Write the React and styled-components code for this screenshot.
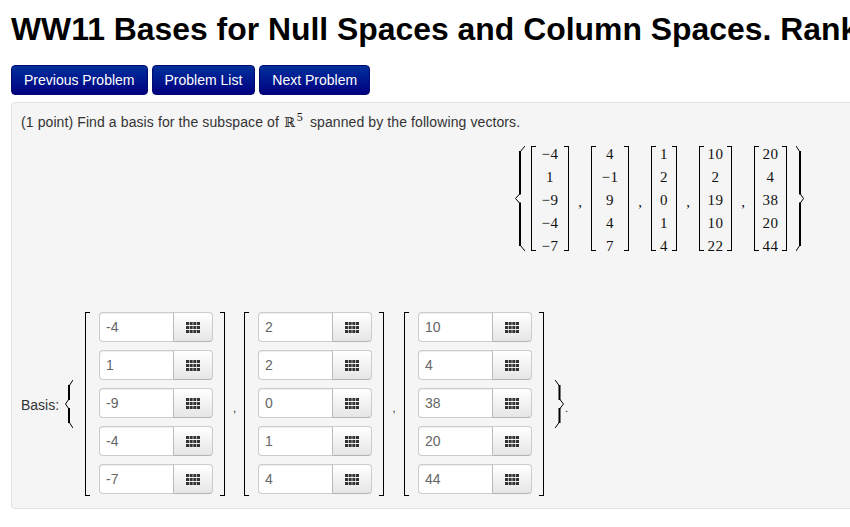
import React from 'react'
import styled, { createGlobalStyle } from 'styled-components'

const GlobalStyle = createGlobalStyle`
    html, body {
        margin: 0;
        padding: 0;
        background-color: white;
        overflow: hidden;
    }
`

const Page = styled.div`
    width: 850px;
    height: 527px;
    overflow: hidden;
    box-sizing: border-box;
    padding: 11px 0 0 11px;
    font-family: "Liberation Sans", Arial, sans-serif;
    color: #333;
`

const Title = styled.h1`
    margin: 0;
    height: 36px;
    line-height: 36px;
    font-size: 31.9px;
    font-weight: bold;
    color: #000;
    white-space: nowrap;
`

const Toolbar = styled.div`
    display: flex;
    gap: 4px;
    margin-top: 18px;
`

const NavButton = styled.a`
    display: block;
    box-sizing: border-box;
    height: 30px;
    line-height: 28px;
    padding: 0 12px;
    font-size: 14px;
    color: white;
    border: 1px solid #000a70;
    border-radius: 4px;
    background: linear-gradient(to bottom, #00309c, #000080);
`

const Panel = styled.div`
    box-sizing: border-box;
    width: 860px;
    height: 407px;
    margin-top: 7px;
    padding: 10px 9px;
    background-color: #f5f5f5;
    border: 1px solid #e3e3e3;
    border-radius: 4px;
`

const Statement = styled.p`
    margin: -1px 0 1px;
    height: 20px;
    line-height: 20px;
    font-size: 14px;
    letter-spacing: 0.1px;
    white-space: nowrap;
`

const Blackboard = styled.span`
    font-family: "DejaVu Serif", serif;
    font-size: 13px;
    margin-left: 1px;
    color: #222;
`

const Power = styled.sup`
    font-family: "Liberation Serif", serif;
    font-size: 12px;
    line-height: 0;
    margin: 0 3px 0 2px;
    color: #111;
`

const DisplayMath = styled.div`
    display: flex;
    align-items: center;
    height: 105px;
    margin-top: 14px;
    margin-left: 494px;
    font-family: "Liberation Serif", serif;
    font-size: 15px;
    color: #111;
`

const MathMatrix = styled.div`
    display: flex;
    align-items: stretch;
    height: 105px;
`

const MathColumn = styled.div`
    display: flex;
    flex-direction: column;
    gap: 7px;
    align-items: center;
    width: ${(props) => props.$width}px;
`

const MathCell = styled.span`
    height: 16px;
    line-height: 16px;
    letter-spacing: 0.5px;
    white-space: nowrap;
`

const MathComma = styled.span`
    width: ${(props) => props.$width}px;
    text-align: center;
    margin-top: 8px;
`

const Bracket = styled.span`
    display: block;
    box-sizing: border-box;
    flex: none;
    width: 5px;
    border: 0 solid #000;
    border-top-width: 1px;
    border-bottom-width: 1px;
    ${(props) => (props.$right ? 'border-right-width: 1px;' : 'border-left-width: 1px;')}
`

const BraceIcon = styled.svg`
    display: block;
    flex: none;
`

const BasisRow = styled.div`
    display: flex;
    align-items: center;
    margin-top: 61px;
    font-size: 14px;
`

const BasisLabel = styled.span`
    width: 44px;
    line-height: 20px;
    padding-top: 2px;
`

const VectorBox = styled.div`
    display: flex;
    align-items: stretch;
    height: 184px;
`

const VectorInputs = styled.div`
    display: flex;
    flex-direction: column;
    gap: 8px;
    margin: 0 7px 0 9px;
`

const InputGroup = styled.div`
    display: flex;
    width: 114px;
    height: 30px;
`

const AnswerInput = styled.input`
    box-sizing: border-box;
    width: 74px;
    height: 30px;
    padding: 0 6px;
    font-family: inherit;
    font-size: 14px;
    color: #666;
    background: white;
    border: 1px solid #ccc;
    border-right: 0;
    border-radius: 4px 0 0 4px;
    box-shadow: inset 0 1px 1px rgba(0, 0, 0, 0.075);
    outline: none;
`

const PadButton = styled.button`
    box-sizing: border-box;
    display: flex;
    align-items: center;
    justify-content: center;
    width: 40px;
    height: 30px;
    padding: 0;
    background: linear-gradient(to bottom, #fff, #e6e6e6);
    border: 1px solid #ccc;
    border-left-color: #bbb;
    border-bottom-color: #b3b3b3;
    border-radius: 0 4px 4px 0;
`

const Separator = styled.span`
    display: block;
    flex: none;
    box-sizing: border-box;
    width: ${(props) => props.$width}px;
    padding-top: ${(props) => props.$drop || 0}px;
    text-align: ${(props) => props.$align || 'center'};
    font-size: 11px;
    color: #111;
`

const GridIcon = () => (
    <svg width="14" height="11" viewBox="0 0 14 11" fill="#333">
        {[0, 4, 8].map((y) =>
            [0, 3.67, 7.33, 11].map((x) => <rect key={x + '-' + y} x={x} y={y} width="3" height="3" />)
        )}
    </svg>
)

// thin tails and tip, thicker straight part, like the TeX brace in the picture
const Brace = ({ right, width, height }) => {
    const mid = height / 2
    const stem = width * 0.5
    const tails = `M${width} 0 L${stem} 6 M${stem} ${mid - 5} L0.5 ${mid} L${stem} ${mid + 5} M${stem} ${height - 6} L${width} ${height}`
    const stems = `M${stem} 5 L${stem} ${mid - 4} M${stem} ${mid + 4} L${stem} ${height - 5}`
    return (
        <BraceIcon width={width} height={height} viewBox={`0 0 ${width} ${height}`}>
            <g transform={right ? `translate(${width} 0) scale(-1 1)` : undefined} fill="none" stroke="#000">
                <path d={tails} strokeWidth="1" />
                <path d={stems} strokeWidth="2" />
            </g>
        </BraceIcon>
    )
}

const mathVectors = [
    { width: 28, cells: ['−4', '1', '−9', '−4', '−7'] },
    { width: 28, cells: ['4', '−1', '9', '4', '7'] },
    { width: 16, cells: ['1', '2', '0', '1', '4'] },
    { width: 23, cells: ['10', '2', '19', '10', '22'] },
    { width: 23, cells: ['20', '4', '38', '20', '44'] },
]

const basisVectors = [
    { gap: 0, cells: ['-4', '1', '-9', '-4', '-7'] },
    { gap: 19, cells: ['2', '2', '0', '1', '4'] },
    { gap: 20, cells: ['10', '4', '38', '20', '44'] },
]

export default function App() {
    return (
        <Page>
            <GlobalStyle />
            <Title>WW11 Bases for Null Spaces and Column Spaces. Rank</Title>
            <Toolbar>
                <NavButton>Previous Problem</NavButton>
                <NavButton>Problem List</NavButton>
                <NavButton>Next Problem</NavButton>
            </Toolbar>
            <Panel>
                <Statement>
                    (1 point) Find a basis for the subspace of <Blackboard>ℝ</Blackboard>
                    <Power>5</Power> spanned by the following vectors.
                </Statement>
                <DisplayMath>
                    <Brace width={10} height={105} />
                    <Separator $width={6} />
                    {mathVectors.map((vector, index) => (
                        <React.Fragment key={index}>
                            {index > 0 && <MathComma $width={22}>,</MathComma>}
                            <MathMatrix>
                                <Bracket />
                                <MathColumn $width={vector.width}>
                                    {vector.cells.map((cell, i) => (
                                        <MathCell key={i}>{cell}</MathCell>
                                    ))}
                                </MathColumn>
                                <Bracket $right />
                            </MathMatrix>
                        </React.Fragment>
                    ))}
                    <Separator $width={9} />
                    <Brace right width={8} height={105} />
                </DisplayMath>
                <BasisRow>
                    <BasisLabel>Basis:</BasisLabel>
                    <Brace width={8} height={48} />
                    <Separator $width={12} />
                    {basisVectors.map((vector, index) => (
                        <React.Fragment key={index}>
                            {index > 0 && <Separator $width={vector.gap} $drop={8}>,</Separator>}
                            <VectorBox>
                                <Bracket />
                                <VectorInputs>
                                    {vector.cells.map((value, i) => (
                                        <InputGroup key={i}>
                                            <AnswerInput readOnly defaultValue={value} />
                                            <PadButton>
                                                <GridIcon />
                                            </PadButton>
                                        </InputGroup>
                                    ))}
                                </VectorInputs>
                                <Bracket $right />
                            </VectorBox>
                        </React.Fragment>
                    ))}
                    <Separator $width={11} />
                    <Brace right width={9} height={48} />
                    <Separator $width={4} $align="right" $drop={8}>.</Separator>
                </BasisRow>
            </Panel>
        </Page>
    )
}
